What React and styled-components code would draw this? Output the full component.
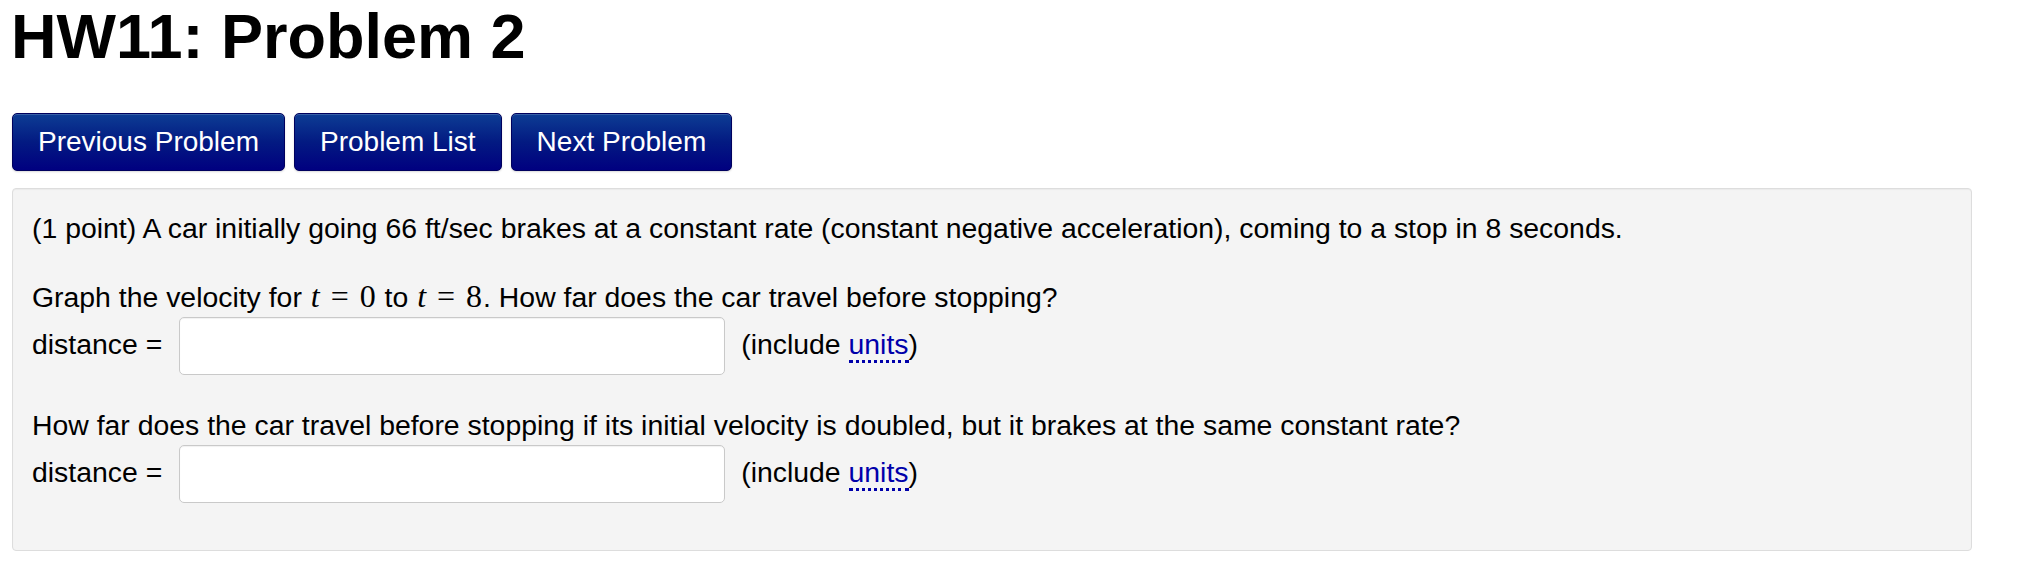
import React from "react";
import styled, { createGlobalStyle } from "styled-components";

const GlobalStyle = createGlobalStyle`
  html, body {
    margin: 0;
    padding: 0;
    background: #ffffff;
  }
  body {
    font-family: "Liberation Sans", Arial, Helvetica, sans-serif;
    color: #000000;
  }
`;

const Page = styled.div`
  padding: 5px 46px 0 12px;
`;

const Title = styled.h1`
  margin: 0 0 0 -1px;
  font-size: 63px;
  line-height: 63px;
  font-weight: 700;
`;

const NavBar = styled.div`
  display: flex;
  gap: 9px;
  margin-top: 45px;
`;

const NavButton = styled.button`
  height: 58px;
  padding: 0 25px;
  border: 1px solid #00005e;
  border-radius: 5px;
  color: #ffffff;
  font-family: "Liberation Sans", Arial, sans-serif;
  font-size: 28px;
  background-image: linear-gradient(to bottom, #0d3d94 0%, #031a82 50%, #000080 100%);
  box-shadow: inset 0 1px 0 rgba(255, 255, 255, 0.18), 0 1px 2px rgba(0, 0, 0, 0.15);
  cursor: pointer;
`;

const ProblemPanel = styled.div`
  margin-top: 17px;
  padding: 21px 19px 47px;
  background: #f4f4f4;
  border: 1px solid #dddddd;
  border-radius: 4px;
  box-shadow: inset 0 1px 1px rgba(0, 0, 0, 0.04);
  font-size: 28.4px;
  line-height: 36px;
`;

const Para = styled.div`
  margin-top: ${(p) => p.$top || 0}px;
  white-space: nowrap;
`;

const MathText = styled.span`
  font-family: "Liberation Serif", "DejaVu Serif", "Times New Roman", serif;
  font-size: 32px;
  padding: 0 1px;
`;

const MathVar = styled.span`
  font-style: italic;
`;

const MathRel = styled.span`
  margin: 0 11px;
`;

const AnswerRow = styled.div`
  display: flex;
  align-items: center;
  margin-top: ${(p) => p.$top || 0}px;
  height: 58px;
`;

const Label = styled.span`
  padding-bottom: 4px;
  margin-right: 17px;
`;

const AnswerInput = styled.input`
  width: 546px;
  height: 58px;
  box-sizing: border-box;
  border: 1px solid #c9c9c9;
  border-radius: 5px;
  background: #ffffff;
  box-shadow: inset 0 1px 1px rgba(0, 0, 0, 0.06);
  outline: none;
  font-size: 28px;
  padding: 0 10px;
`;

const Hint = styled.span`
  padding-bottom: 4px;
  margin-left: 16px;
`;

const UnitsLink = styled.span`
  color: #0000aa;
  border-bottom: 3px dotted #0000aa;
`;

const MathExpr = ({ v, n }) => (
  <MathText>
    <MathVar>{v}</MathVar>
    <MathRel>=</MathRel>
    {n}
  </MathText>
);

const Answer = ({ top }) => (
  <AnswerRow $top={top}>
    <Label>distance =</Label>
    <AnswerInput type="text" />
    <Hint>
      (include <UnitsLink>units</UnitsLink>)
    </Hint>
  </AnswerRow>
);

export default function App() {
  return (
    <>
      <GlobalStyle />
      <Page>
        <Title>HW11: Problem 2</Title>
        <NavBar>
          <NavButton>Previous Problem</NavButton>
          <NavButton>Problem List</NavButton>
          <NavButton>Next Problem</NavButton>
        </NavBar>
        <ProblemPanel>
          <Para>
            (1 point) A car initially going 66 ft/sec brakes at a constant rate (constant negative
            acceleration), coming to a stop in 8 seconds.
          </Para>
          <Para $top={32}>
            Graph the velocity for <MathExpr v="t" n="0" /> to <MathExpr v="t" n="8" />. How far
            does the car travel before stopping?
          </Para>
          <Answer top={2} />
          <Para $top={32}>
            How far does the car travel before stopping if its initial velocity is doubled, but it
            brakes at the same constant rate?
          </Para>
          <Answer top={2} />
        </ProblemPanel>
      </Page>
    </>
  );
}
